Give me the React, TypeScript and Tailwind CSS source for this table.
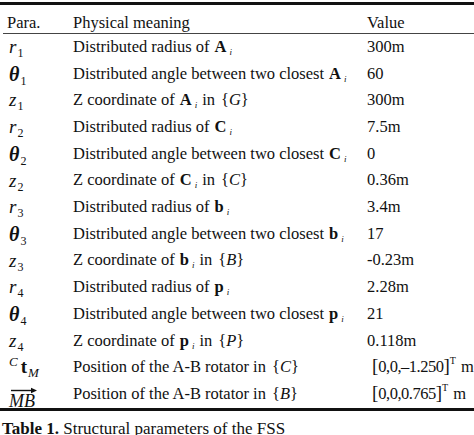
import React from "react";

function Sym({ base, sub, theta }: { base: string; sub: string; theta?: boolean }) {
  return (
    <span className="inline-flex items-baseline">
      <span className={theta ? "italic text-[20px] font-bold" : "italic text-[19px]"}>{base}</span>
      <span className="text-[12px] relative top-[4px] ml-[1px]">{sub}</span>
    </span>
  );
}

function Vec({ b }: { b: string }) {
  return (
    <span className="inline-flex items-baseline mx-[5px]">
      <span className="font-bold">{b}</span>
      <span className="italic text-[9px] relative top-[3px] ml-[3px]">i</span>
    </span>
  );
}

function Frame({ f }: { f: string }) {
  return (
    <span className="ml-[6px]">
      {"{"}
      <span className="italic">{f}</span>
      {"}"}
    </span>
  );
}

function Bracket({ v }: { v: string }) {
  return (
    <span className="inline-flex items-baseline ml-[5px]">
      <span className="text-[19px] leading-none">[</span>
      <span className="tracking-[-0.5px]">{v}</span>
      <span className="text-[19px] leading-none">]</span>
      <span className="text-[10px] relative -top-[8px]">T</span>
      <span className="ml-[5px]">m</span>
    </span>
  );
}

const rows: { p: React.ReactNode; m: React.ReactNode; v: React.ReactNode }[] = [
  { p: <Sym base="r" sub="1" />, m: <>Distributed radius of<Vec b="A" /></>, v: "300m" },
  { p: <Sym base="θ" sub="1" theta />, m: <>Distributed angle between two closest<Vec b="A" /></>, v: "60" },
  { p: <Sym base="z" sub="1" />, m: <>Z coordinate of<Vec b="A" />in<Frame f="G" /></>, v: "300m" },
  { p: <Sym base="r" sub="2" />, m: <>Distributed radius of<Vec b="C" /></>, v: "7.5m" },
  { p: <Sym base="θ" sub="2" theta />, m: <>Distributed angle between two closest<Vec b="C" /></>, v: "0" },
  { p: <Sym base="z" sub="2" />, m: <>Z coordinate of<Vec b="C" />in<Frame f="C" /></>, v: "0.36m" },
  { p: <Sym base="r" sub="3" />, m: <>Distributed radius of<Vec b="b" /></>, v: "3.4m" },
  { p: <Sym base="θ" sub="3" theta />, m: <>Distributed angle between two closest<Vec b="b" /></>, v: "17" },
  { p: <Sym base="z" sub="3" />, m: <>Z coordinate of<Vec b="b" />in<Frame f="B" /></>, v: "-0.23m" },
  { p: <Sym base="r" sub="4" />, m: <>Distributed radius of<Vec b="p" /></>, v: "2.28m" },
  { p: <Sym base="θ" sub="4" theta />, m: <>Distributed angle between two closest<Vec b="p" /></>, v: "21" },
  { p: <Sym base="z" sub="4" />, m: <>Z coordinate of<Vec b="p" />in<Frame f="P" /></>, v: "0.118m" },
  {
    p: (
      <span className="inline-flex items-baseline">
        <span className="italic text-[13px] relative -top-[7px]">C</span>
        <span className="font-bold text-[19px] ml-[3px]">t</span>
        <span className="italic text-[13px] relative top-[4px] ml-[1px]">M</span>
      </span>
    ),
    m: <>Position of the A-B rotator in<Frame f="C" /></>,
    v: <Bracket v="0,0,–1.250" />,
  },
  {
    p: (
      <span className="inline-flex flex-col items-start">
        <svg width="28" height="7" viewBox="0 0 28 7" className="mb-[-3px] ml-[1px]">
          <line x1="1" y1="3.5" x2="24" y2="3.5" stroke="#111" strokeWidth="1.4" />
          <path d="M21 0.8 L27 3.5 L21 6.2 Z" fill="#111" />
        </svg>
        <span className="italic text-[18px] leading-[20px]">MB</span>
      </span>
    ),
    m: <>Position of the A-B rotator in<Frame f="B" /></>,
    v: <Bracket v="0,0,0.765" />,
  },
];

export default function App() {
  return (
    <div className="w-[474px] h-[435px] bg-white overflow-hidden text-[#111] font-['Liberation_Serif','Times_New_Roman',serif]">
      <div className="pt-[2px]">
        <div className="h-[3px] bg-[#111]" />
        <div className="h-[28px] flex items-center pt-[8px] text-[16.5px]">
          <div className="w-[73px] shrink-0 pl-[7px]">Para.</div>
          <div className="w-[294px] shrink-0">Physical meaning</div>
          <div className="shrink-0">Value</div>
        </div>
        <div className="h-px bg-[#444] ml-[3px]" />
        {rows.map((r, i) => (
          <div key={i} className="h-[26.7px] flex items-center text-[16.5px] whitespace-nowrap">
            <div className="w-[73px] shrink-0 pl-[9px]">{r.p}</div>
            <div className="w-[294px] shrink-0">{r.m}</div>
            <div className="shrink-0">{r.v}</div>
          </div>
        ))}
        <div className="h-[3px] bg-[#111]" />
        <div className="mt-[8px] text-[17px] leading-[20px] pl-[2px]">
          <span className="font-bold">Table 1.</span> Structural parameters of the FSS
        </div>
      </div>
    </div>
  );
}
